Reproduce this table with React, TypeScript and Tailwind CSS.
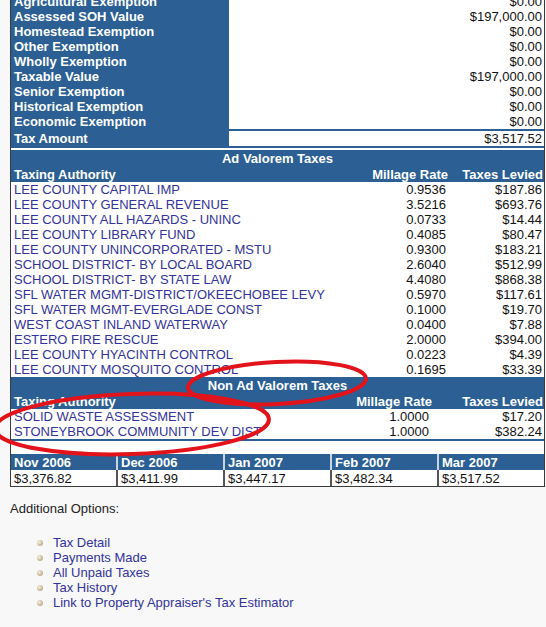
import React from "react";

const blue = "bg-[#2c5f94]";

const values: [string, string][] = [
  ["Agricultural Exemption", "$0.00"],
  ["Assessed SOH Value", "$197,000.00"],
  ["Homestead Exemption", "$0.00"],
  ["Other Exemption", "$0.00"],
  ["Wholly Exemption", "$0.00"],
  ["Taxable Value", "$197,000.00"],
  ["Senior Exemption", "$0.00"],
  ["Historical Exemption", "$0.00"],
  ["Economic Exemption", "$0.00"],
];

const adValorem: [string, string, string][] = [
  ["LEE COUNTY CAPITAL IMP", "0.9536", "$187.86"],
  ["LEE COUNTY GENERAL REVENUE", "3.5216", "$693.76"],
  ["LEE COUNTY ALL HAZARDS - UNINC", "0.0733", "$14.44"],
  ["LEE COUNTY LIBRARY FUND", "0.4085", "$80.47"],
  ["LEE COUNTY UNINCORPORATED - MSTU", "0.9300", "$183.21"],
  ["SCHOOL DISTRICT- BY LOCAL BOARD", "2.6040", "$512.99"],
  ["SCHOOL DISTRICT- BY STATE LAW", "4.4080", "$868.38"],
  ["SFL WATER MGMT-DISTRICT/OKEECHOBEE LEVY", "0.5970", "$117.61"],
  ["SFL WATER MGMT-EVERGLADE CONST", "0.1000", "$19.70"],
  ["WEST COAST INLAND WATERWAY", "0.0400", "$7.88"],
  ["ESTERO FIRE RESCUE", "2.0000", "$394.00"],
  ["LEE COUNTY HYACINTH CONTROL", "0.0223", "$4.39"],
  ["LEE COUNTY MOSQUITO CONTROL", "0.1695", "$33.39"],
];

const nonAdValorem: [string, string, string][] = [
  ["SOLID WASTE ASSESSMENT", "1.0000", "$17.20"],
  ["STONEYBROOK COMMUNITY DEV DIST", "1.0000", "$382.24"],
];

const months: [string, string][] = [
  ["Nov 2006", "$3,376.82"],
  ["Dec 2006", "$3,411.99"],
  ["Jan 2007", "$3,447.17"],
  ["Feb 2007", "$3,482.34"],
  ["Mar 2007", "$3,517.52"],
];

const options = [
  "Tax Detail",
  "Payments Made",
  "All Unpaid Taxes",
  "Tax History",
  "Link to Property Appraiser's Tax Estimator",
];

const App = () => {
  return (
    <div className="relative h-[627px] overflow-hidden bg-[#f8f8f8] font-['Liberation_Sans',Arial,sans-serif] text-[13px] leading-[15px] text-[#111]">
      <div className="-mt-[6px] ml-[10px] w-[535px] border-x border-b border-[#3a3a3a] bg-white">
        {/* assessment values */}
        {values.map(([label, value]) => (
          <div key={label} className="grid h-[15px] grid-cols-[218px_1fr]">
            <div className={`${blue} pl-[3px] font-bold text-white`}>{label}</div>
            <div className="bg-white pr-[2px] text-right">{value}</div>
          </div>
        ))}
        <div className="grid h-[19px] grid-cols-[218px_1fr]">
          <div className={`${blue} flex items-center pl-[3px] font-bold text-white`}>Tax Amount</div>
          <div className="flex items-center justify-end border-y-2 border-[#2c5f94] bg-white pr-[2px]">
            $3,517.52
          </div>
        </div>
        <div className="h-[2px] bg-white" />

        {/* ad valorem */}
        <div className={`${blue} font-bold text-white`}>
          <div className="flex h-[16px] items-center justify-center">Ad Valorem Taxes</div>
          <div className="grid h-[16px] grid-cols-[1fr_100px_93px] items-center">
            <div className="pl-[3px]">Taxing Authority</div>
            <div className="pr-[3px] text-right">Millage Rate</div>
            <div className="pr-[1px] text-right">Taxes Levied</div>
          </div>
        </div>
        {adValorem.map(([name, rate, levied]) => (
          <div key={name} className="grid h-[15px] grid-cols-[1fr_100px_93px]">
            <div className="whitespace-nowrap pl-[3px] text-[#333399]">{name}</div>
            <div className="pr-[5px] text-right">{rate}</div>
            <div className="pr-[2px] text-right">{levied}</div>
          </div>
        ))}

        {/* non ad valorem */}
        <div className={`${blue} font-bold text-white`}>
          <div className="flex h-[16px] items-center justify-center">Non Ad Valorem Taxes</div>
          <div className="grid h-[16px] grid-cols-[1fr_100px_111px] items-center">
            <div className="pl-[3px]">Taxing Authority</div>
            <div className="pr-[1px] text-right">Millage Rate</div>
            <div className="pr-[1px] text-right">Taxes Levied</div>
          </div>
        </div>
        {nonAdValorem.map(([name, rate, levied]) => (
          <div key={name} className="grid h-[15px] grid-cols-[1fr_100px_111px]">
            <div className="whitespace-nowrap pl-[3px] text-[#333399]">{name}</div>
            <div className="pr-[4px] text-right">{rate}</div>
            <div className="pr-[2px] text-right">{levied}</div>
          </div>
        ))}
        <div className={`${blue} h-[2px]`} />
        <div className="h-[13px] bg-white" />

        {/* monthly amounts */}
        <div className="grid h-[16px] grid-cols-5 gap-[2px] bg-[#c9d4e2]">
          {months.map(([m]) => (
            <div key={m} className={`${blue} flex items-center pl-[3px] font-bold text-white`}>
              {m}
            </div>
          ))}
        </div>
        <div className="grid h-[16px] grid-cols-5 gap-[2px] bg-[#555]">
          {months.map(([m, v]) => (
            <div key={m} className="flex items-center bg-white pl-[3px]">
              {v}
            </div>
          ))}
        </div>
      </div>

      <div className="ml-[10px] mt-[14px] text-[#222]">Additional Options:</div>
      <ul className="ml-[37px] mt-[19px]">
        {options.map((o) => (
          <li key={o} className="flex h-[15px] items-center">
            <span className="mr-[10px] h-[6px] w-[6px] rounded-full bg-[radial-gradient(circle_at_35%_35%,#f6f0de,#a8956a)]" />
            <span className="text-[#333399]">{o}</span>
          </li>
        ))}
      </ul>

      {/* red annotation marks */}
      <svg className="pointer-events-none absolute left-0 top-0" width="546" height="627">
        <ellipse cx="277" cy="383" rx="89" ry="21" transform="rotate(-3 277 383)" fill="none" stroke="#e3131b" strokeWidth="4" />
        <ellipse cx="132" cy="424" rx="137" ry="30" transform="rotate(-2 132 424)" fill="none" stroke="#e3131b" strokeWidth="4" />
      </svg>
    </div>
  );
};

export default App;
